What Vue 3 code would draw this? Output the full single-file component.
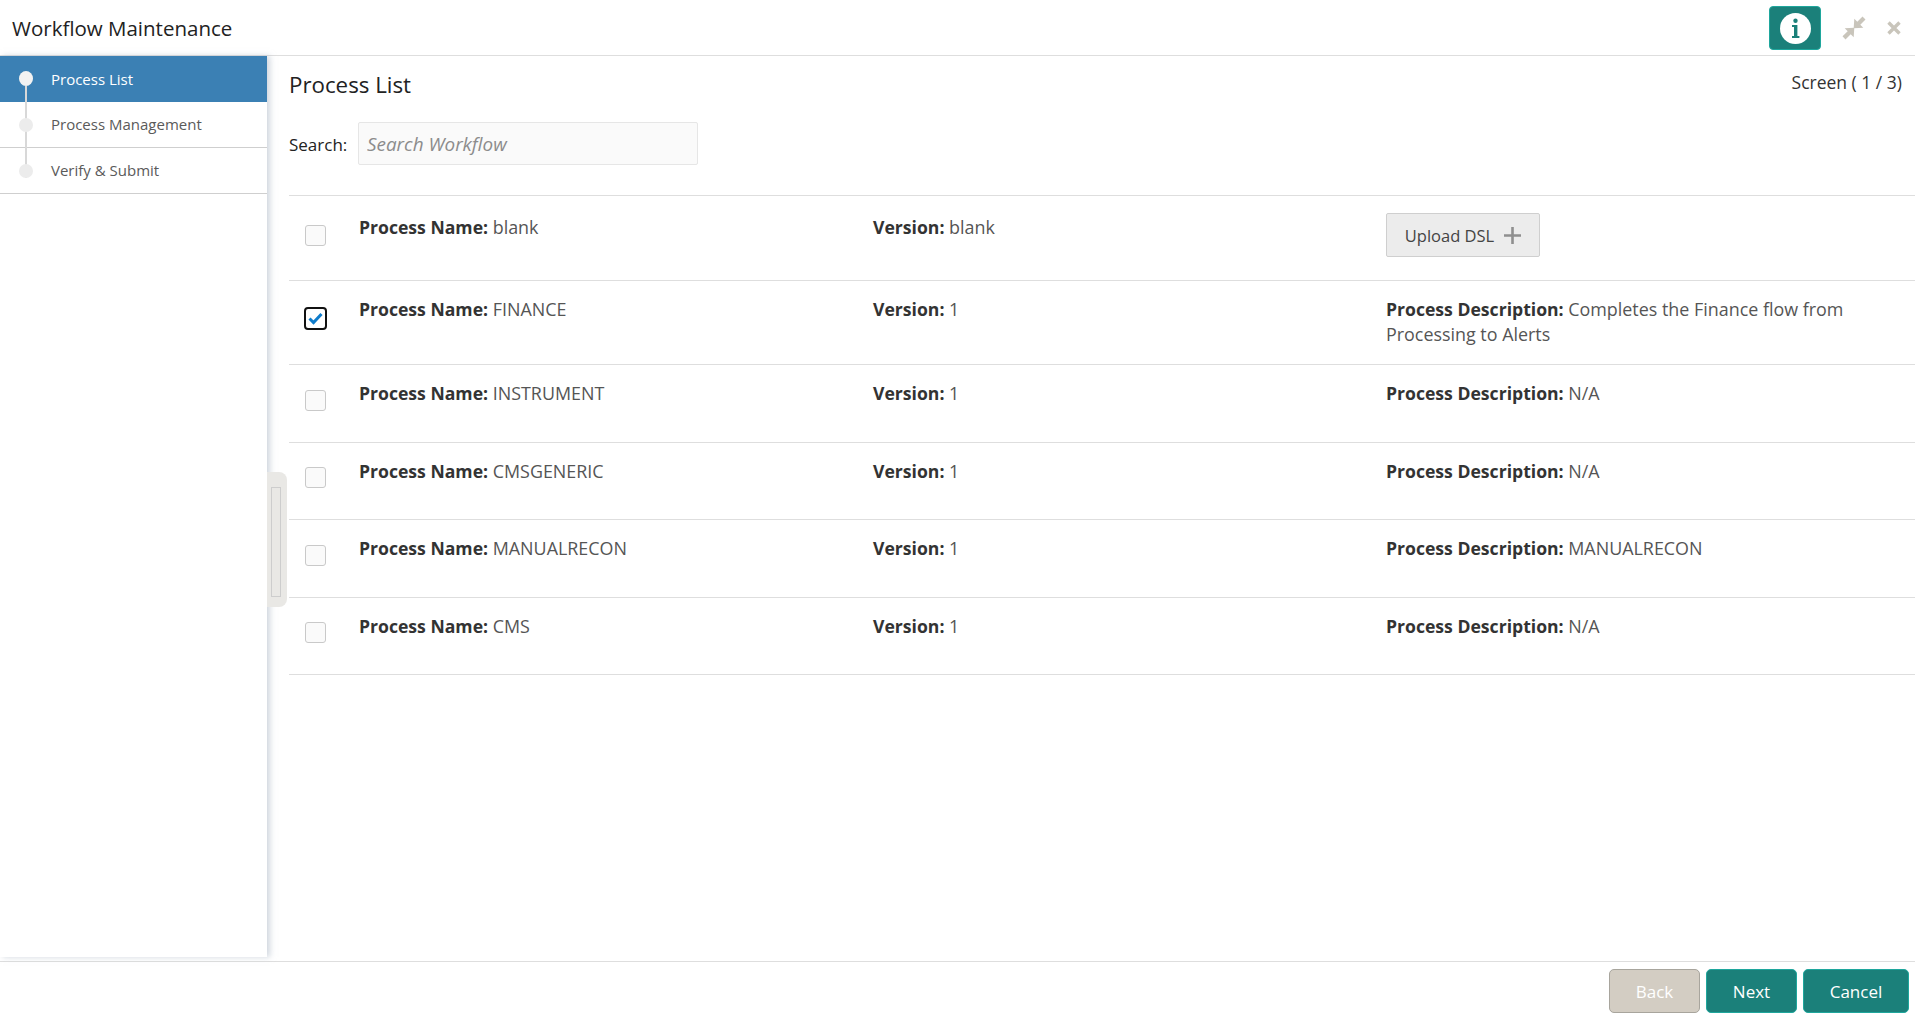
<script setup>
const steps = [
  { label: 'Process List', active: true },
  { label: 'Process Management', active: false },
  { label: 'Verify & Submit', active: false },
]
const rows = [
  { name: 'blank', version: 'blank', upload: true, cls: 'first' },
  { name: 'FINANCE', version: '1', desc: 'Completes the Finance flow from Processing to Alerts', checked: true, cls: 'second' },
  { name: 'INSTRUMENT', version: '1', desc: 'N/A' },
  { name: 'CMSGENERIC', version: '1', desc: 'N/A' },
  { name: 'MANUALRECON', version: '1', desc: 'MANUALRECON' },
  { name: 'CMS', version: '1', desc: 'N/A' },
]
</script>

<template>
  <div class="app">
    <header class="top">
      <div class="title">Workflow Maintenance</div>
      <div class="actions">
        <button class="info" aria-label="Info">
          <svg width="31" height="31" viewBox="0 0 31 31">
            <circle cx="15.5" cy="15.5" r="15.5" fill="#fff" />
            <circle cx="15.5" cy="7.8" r="2.2" fill="#1b807a" />
            <path d="M12 12h5.400v11h2v2h-7.400v-2h2v-9h-2z" fill="#1b807a" />
          </svg>
        </button>
        <svg class="shrink" width="24" height="24" viewBox="0 0 24 24" fill="#c9c5bb">
          <path d="M20.500 0.500l-5.200 5.200-3-3-.6 9.600 9.600-.6-3-3 5.200-5.200z" />
          <path d="M3.500 23.500l5.200-5.200 3 3 .6-9.600-9.600.6 3 3L.5 20.300z" />
        </svg>
        <svg class="close" width="14" height="14" viewBox="0 0 14 14">
          <path d="M1.500 1.500l11 11M12.500 1.500l-11 11" stroke="#c9c5bb" stroke-width="3.400" />
        </svg>
      </div>
    </header>

    <div class="middle">
      <aside class="side">
        <div v-for="(s, i) in steps" :key="s.label" class="step" :class="{ active: s.active, last: i === steps.length - 1 }">
          <span class="dot"></span>
          <span class="step-label">{{ s.label }}</span>
        </div>
      </aside>
      <div class="handle"><div class="grip"></div></div>

      <main class="content">
        <div class="head">
          <h1>Process List</h1>
          <span class="screen">Screen ( 1 / 3)</span>
        </div>
        <div class="search">
          <label for="wf">Search:</label>
          <input id="wf" type="text" placeholder="Search Workflow" />
        </div>
        <div class="list">
          <div v-for="r in rows" :key="r.name" class="row" :class="r.cls">
            <div class="check-cell">
              <span class="check" :class="{ on: r.checked }">
                <svg v-if="r.checked" width="15" height="13" viewBox="0 0 15 13">
                  <path d="M1.500 6.500l4 4 8-8.500" fill="none" stroke="#0f7ccb" stroke-width="3" />
                </svg>
              </span>
            </div>
            <div class="cell"><b>Process Name:</b> {{ r.name }}</div>
            <div class="cell"><b>Version:</b> {{ r.version }}</div>
            <div class="cell last-cell">
              <button v-if="r.upload" class="upload">
                <span>Upload DSL</span>
                <svg width="17" height="17" viewBox="0 0 17 17"><path d="M8.500 0v17M0 8.500h17" stroke="#8f8f8f" stroke-width="2.600" /></svg>
              </button>
              <template v-else><b>Process Description:</b> {{ r.desc }}</template>
            </div>
          </div>
        </div>
      </main>
    </div>

    <footer class="foot">
      <button class="btn back">Back</button>
      <button class="btn next">Next</button>
      <button class="btn cancel">Cancel</button>
    </footer>
  </div>
</template>

<style>
html, body { margin: 0; padding: 0; background: #fff; }
</style>

<style scoped>
.app {
  height: 100vh;
  display: flex;
  flex-direction: column;
  font-family: "Open Sans", "Noto Sans", sans-serif;
  color: #2c2c2c;
  overflow: hidden;
  background: #fff;
}
.top {
  height: 55px;
  flex: none;
  display: flex;
  align-items: center;
  justify-content: space-between;
  padding: 0 14px 0 12px;
  border-bottom: 1px solid #dedede;
}
.title { font-size: 20.5px; color: #222; }
.actions { display: flex; align-items: center; }
.info {
  width: 52px;
  height: 44px;
  margin-top: 1px;
  border: 1px solid #1fa79d;
  border-radius: 4px;
  background: #1b807a;
  display: flex;
  align-items: center;
  justify-content: center;
  padding: 0;
}
.shrink { margin-left: 21px; }
.close { margin-left: 21px; }
.middle { flex: 1; display: flex; min-height: 0; }
.side {
  width: 267px;
  flex: none;
  box-shadow: 3px 0 6px rgba(170, 180, 195, .55);
  margin-bottom: 4px;
  position: relative;
  z-index: 1;
}
.step {
  height: 45px;
  display: flex;
  align-items: center;
  border-bottom: 1px solid #cfcfcf;
  position: relative;
  font-size: 15px;
  color: #5a5a5a;
}
.step.active { background: #3b80b4; color: #fff; border-bottom-color: #3b80b4; }
.dot {
  width: 14px;
  height: 14px;
  margin-left: 19px;
  border-radius: 50%;
  background: #ececec;
  position: relative;
  z-index: 1;
}
.active .dot { background: #f2f2f2; height: 15px; width: 14px; }
.step:not(.last)::after {
  content: "";
  position: absolute;
  left: 25px;
  top: 30px;
  width: 2px;
  height: 46px;
  background: #d8d8d8;
}
.step-label { margin-left: 18px; margin-top: -2px; }
.active .step-label { margin-top: 0; }
.handle {
  width: 20px;
  height: 135px;
  margin-top: 416px;
  flex: none;
  background: #e9e8e5;
  border-radius: 0 8px 8px 0;
  display: flex;
  align-items: center;
  padding: 4px 0 0 4px;
  box-sizing: border-box;
  position: relative;
  z-index: 2;
}
.grip { width: 8px; height: 108px; border: 1px solid #cdcdcd; }
.content { flex: 1; min-width: 0; margin-left: 2px; }
.head {
  display: flex;
  justify-content: space-between;
  padding: 13px 13px 0 0;
  height: 44px;
  box-sizing: content-box;
}
h1 { margin: 0; font-size: 22.3px; font-weight: 400; color: #222; line-height: 32px; }
.screen { font-size: 17.5px; line-height: 26px; color: #333; }
.search {
  display: flex;
  align-items: center;
  height: 43px;
  margin-top: 9px;
  margin-bottom: 30px;
}
.search label { font-size: 17px; color: #222; width: 69px; padding-top: 2px; }
.search input {
  width: 340px;
  height: 43px;
  box-sizing: border-box;
  background: #fafafa;
  border: 1px solid #e6e6e6;
  border-radius: 2px;
  padding: 0 8px;
  font: italic 18.9px "Open Sans", sans-serif;
  outline: none;
}
.search input::placeholder { color: #8c8c8c; opacity: 1; }
.list { border-top: 1px solid #dedede; }
.row {
  height: 77.5px;
  box-sizing: border-box;
  border-bottom: 1px solid #dedede;
  display: grid;
  grid-template-columns: 70px 514px 513px 1fr;
  padding-top: 16px;
  font-size: 17.9px;
  line-height: 25px;
  color: #555;
}
.row.first { height: 85px; padding-top: 19px; }
.row.second { height: 84px; }
.cell b { font-size: 17.6px; font-weight: 700; color: #333; }
.last-cell { padding-right: 40px; }
.check-cell { display: flex; align-items: center; padding-left: 16px; height: 100%; }
.check {
  width: 21px;
  height: 21px;
  box-sizing: border-box;
  border: 1px solid #c9c9c9;
  border-radius: 3px;
  background: #fafafa;
  display: flex;
  align-items: center;
  justify-content: center;
  margin-top: -22px;
}
.first .check { margin-top: -25px; }
.second .check { margin-top: -24px; }
.check.on {
  width: 23px;
  height: 23px;
  margin-left: -1px;
  border: 2px solid #111;
  border-radius: 4px;
  background: #fff;
}
.upload {
  width: 154px;
  height: 44px;
  margin-top: -2px;
  box-sizing: border-box;
  background: #ececec;
  border: 1px solid #cfcfcf;
  border-radius: 2px;
  font: 16.5px "Open Sans", sans-serif;
  color: #444;
  display: flex;
  align-items: center;
  justify-content: center;
  gap: 10px;
  padding: 0;
}
.foot {
  height: 56px;
  flex: none;
  border-top: 1px solid #dedede;
  display: flex;
  justify-content: flex-end;
  gap: 6px;
  padding: 7px 6px 0 0;
  box-sizing: border-box;
}
.btn {
  height: 44px;
  box-sizing: border-box;
  border-radius: 5px;
  font: 17px "Open Sans", sans-serif;
  color: #fff;
  padding: 0;
}
.back { width: 91px; background: #d3cdc3; border: 1px solid #a8a59d; }
.next { width: 91px; background: #1b807a; border: 1px solid #1fa79d; }
.cancel { width: 106px; background: #1b807a; border: 1px solid #1fa79d; }
</style>
